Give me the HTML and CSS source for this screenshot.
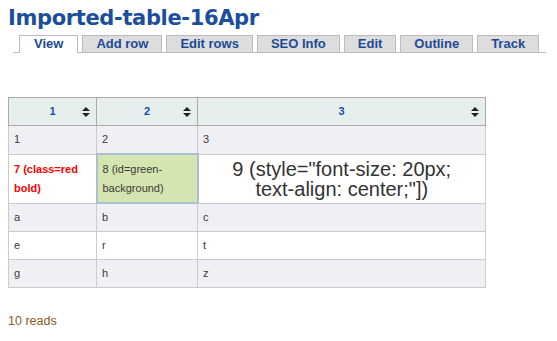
FILE: index.html
```html
<!DOCTYPE html>
<html>
<head>
<meta charset="utf-8">
<link rel="stylesheet" href="styles.css">
</head>
<body>
<div class="page">
  <h1 class="title">Imported-table-16Apr</h1>
  <ul class="tabs">
    <li class="tab active">View</li>
    <li class="tab">Add row</li>
    <li class="tab">Edit rows</li>
    <li class="tab">SEO Info</li>
    <li class="tab">Edit</li>
    <li class="tab">Outline</li>
    <li class="tab">Track</li>
  </ul>
  <table class="grid">
    <colgroup>
      <col class="c1"><col class="c2"><col class="c3">
    </colgroup>
    <thead>
      <tr>
        <th><span class="hd">1</span><svg class="sort" viewBox="0 0 8 10" width="8" height="10"><path d="M4 0 L8 4 L0 4 Z M0 6 L8 6 L4 10 Z" fill="#222"/></svg></th>
        <th><span class="hd">2</span><svg class="sort" viewBox="0 0 8 10" width="8" height="10"><path d="M4 0 L8 4 L0 4 Z M0 6 L8 6 L4 10 Z" fill="#222"/></svg></th>
        <th><span class="hd">3</span><svg class="sort" viewBox="0 0 8 10" width="8" height="10"><path d="M4 0 L8 4 L0 4 Z M0 6 L8 6 L4 10 Z" fill="#222"/></svg></th>
      </tr>
    </thead>
    <tbody>
      <tr class="odd"><td>1</td><td>2</td><td>3</td></tr>
      <tr class="even"><td class="red">7 (class=red bold)</td><td class="green">8 (id=green-background)</td><td class="big">9 (style="font-size: 20px; <span class="nowrap">text-align:</span> center;"])</td></tr>
      <tr class="odd"><td>a</td><td>b</td><td>c</td></tr>
      <tr class="even"><td>e</td><td>r</td><td>t</td></tr>
      <tr class="odd"><td>g</td><td>h</td><td>z</td></tr>
    </tbody>
  </table>
  <div class="reads">10 reads</div>
</div>
</body>
</html>
```

FILE: styles.css
```css
html, body {
  margin: 0;
  padding: 0;
  background: #ffffff;
}
.page {
  padding: 6px 0 0 8px;
  font-family: "Liberation Sans", Arial, sans-serif;
}
.title {
  margin: 0;
  font-family: "DejaVu Sans", Verdana, sans-serif;
  font-weight: bold;
  font-size: 21px;
  line-height: 24px;
  color: #1b4e9b;
  letter-spacing: -0.35px;
}
.tabs {
  list-style: none;
  margin: 5px 0 0 5px;
  padding: 0 0 0 6px;
  width: 527px;
  display: flex;
  gap: 4px;
  align-items: flex-end;
  border-bottom: 1px solid #bbbbbb;
  height: 17px;
}
.tab {
  box-sizing: border-box;
  flex-shrink: 0;
  white-space: nowrap;
  height: 17px;
  padding: 0 13px;
  background: #dddddd;
  border: 1px solid #bbbbbb;
  border-bottom: none;
  font-weight: bold;
  font-size: 13px;
  line-height: 16px;
  color: #1c4a94;
}
.tab.active {
  background: #ffffff;
  height: 18px;
  margin-bottom: -1px;
  padding: 0 14px;
}
.grid {
  margin-top: 44px;
  border-collapse: collapse;
  table-layout: fixed;
  width: 477px;
  font-size: 11px;
  line-height: 19px;
  color: #3a3a3a;
}
.c1 { width: 88px; }
.c2 { width: 101px; }
.c3 { width: 288px; }
.grid th {
  position: relative;
  background: #e6eeee;
  border: 1px solid #aaaaaa;
  padding: 4px 5px;
  font-weight: bold;
  color: #1d4f9f;
  text-align: center;
  height: 19px;
}
.sort {
  position: absolute;
  right: 6px;
  top: 9px;
  width: 8px;
  height: 10px;
}
.grid td {
  border: 1px solid #cccccc;
  padding: 4px 5px;
  vertical-align: middle;
  text-align: left;
}
.odd td { background: #efeff5; }
.even td { background: #ffffff; }
.grid td.red {
  color: #ff0000;
  font-weight: bold;
}
.grid td.green {
  background: #d4e5b0;
  border: 2px solid #a9bfd5;
}
.grid td.big {
  font-size: 20px;
  line-height: 20px;
  text-align: center;
  color: #333333;
}
.nowrap {
  white-space: nowrap;
}
.reads {
  margin-top: 26px;
  font-size: 12.5px;
  color: #8a5a2b;
}
```
